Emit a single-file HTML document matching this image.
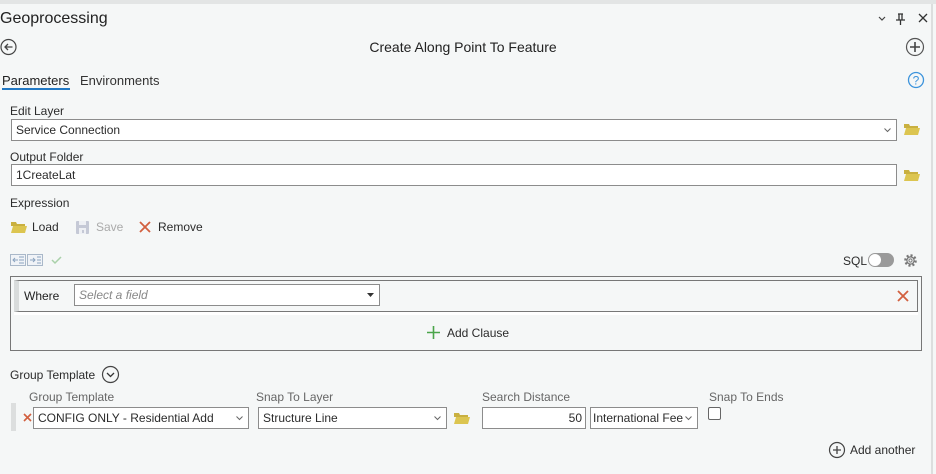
<!DOCTYPE html>
<html><head><style>
*{box-sizing:border-box;margin:0;padding:0}
body{width:936px;height:474px;background:#f5f7f7;font-family:"Liberation Sans",sans-serif;font-size:12px;color:#2b2b2b;position:relative;overflow:hidden}
.a{position:absolute;white-space:nowrap}
.inp{position:absolute;background:#fff;border:1px solid #8c8c8c;height:22px;line-height:20px;padding-left:4px;font-size:12px}
.chev{position:absolute;right:5px;top:8px;width:7px;height:5px}
.lbl{color:#666}
</style></head><body>
<div class="a" style="left:0;top:0;width:936px;height:4px;background:#e3e5e5"></div>
<div class="a" style="left:931px;top:4px;width:2px;height:470px;background:#dcdede"></div>
<div class="a" style="left:0;top:10px;font-size:16px;color:#222">Geoprocessing</div>
<svg class="a" style="left:874px;top:10px" width="60" height="18"><path d="M5 7l3 3 3-3" stroke="#444" fill="none" stroke-width="1.2"/><path d="M24 4h5M25 4v6h3V4M22 10h9M26.5 10v5" stroke="#333" fill="none" stroke-width="1.3"/><path d="M45 4l8 8M53 4l-8 8" stroke="#333" stroke-width="1.3"/></svg>
<svg class="a" style="left:0;top:38px" width="18" height="18"><circle cx="8.5" cy="9" r="7.5" fill="none" stroke="#444" stroke-width="1.2"/><path d="M12.5 9H5M8 6L5 9l3 3" stroke="#444" fill="none" stroke-width="1.3"/></svg>
<div class="a" style="left:0;width:926px;top:39px;text-align:center;font-size:14px;color:#222">Create Along Point To Feature</div>
<svg class="a" style="left:905px;top:37px" width="20" height="20"><circle cx="10" cy="10" r="8.5" fill="none" stroke="#555" stroke-width="1.2"/><path d="M10 5v10M5 10h10" stroke="#444" stroke-width="1.6"/></svg>
<div class="a" style="left:2px;top:73px;font-size:13px;color:#222">Parameters</div>
<div class="a" style="left:2px;top:88px;width:68px;height:2px;background:#2178c4"></div>
<div class="a" style="left:80px;top:73px;font-size:13px;color:#333">Environments</div>
<svg class="a" style="left:907px;top:71px" width="18" height="18"><circle cx="9" cy="9" r="7.5" fill="none" stroke="#3d94dc" stroke-width="1.3"/><text x="9" y="13.5" font-size="12" text-anchor="middle" fill="#3d94dc" font-family="Liberation Sans">?</text></svg>
<div class="a" style="left:10px;top:104px">Edit Layer</div>
<div class="inp" style="left:11px;top:119px;width:886px">Service Connection<svg class="chev"><path d="M0.5 0.5l3 3 3-3" stroke="#666" fill="none"/></svg></div>
<svg class="a" style="left:903px;top:122px" width="18" height="14"><path d="M1 2h5l1 2h8v2H1z" fill="#c9b040"/><path d="M1 13l2-7h14l-2 7z" fill="#dcc550"/></svg>
<div class="a" style="left:10px;top:150px">Output Folder</div>
<div class="inp" style="left:11px;top:164px;width:886px">1CreateLat</div>
<svg class="a" style="left:903px;top:168px" width="18" height="14"><path d="M1 2h5l1 2h8v2H1z" fill="#c9b040"/><path d="M1 13l2-7h14l-2 7z" fill="#dcc550"/></svg>
<div class="a" style="left:10px;top:196px">Expression</div>
<svg class="a" style="left:10px;top:220px" width="18" height="14"><path d="M1 2h5l1 2h8v2H1z" fill="#c9b040"/><path d="M1 13l2-7h14l-2 7z" fill="#dcc550"/></svg>
<div class="a" style="left:32px;top:220px">Load</div>
<svg class="a" style="left:75px;top:220px" width="16" height="15"><rect x="1" y="1" width="13" height="13" rx="1" fill="#c5c9d6"/><rect x="4" y="1" width="7" height="4" fill="#eef0f4"/><rect x="4" y="8" width="7" height="6" fill="#eef0f4"/><rect x="7" y="10" width="2" height="3" fill="#c5c9d6"/></svg>
<div class="a" style="left:96px;top:220px;color:#aaa">Save</div>
<svg class="a" style="left:139px;top:221px" width="12" height="12"><path d="M1 1l10 10M11 1L1 11" stroke="#d2603f" stroke-width="1.8"/></svg>
<div class="a" style="left:158px;top:220px">Remove</div>
<svg class="a" style="left:10px;top:253px" width="55" height="14"><rect x="0.5" y="1.5" width="15" height="11" fill="#f0f3f7" stroke="#a9b8c9"/><rect x="17.5" y="1.5" width="15" height="11" fill="#f0f3f7" stroke="#a9b8c9"/><path d="M3 7h5M5 5L3 7l2 2M9 4h5M9 7h5M9 10h5M20 7h5M23 5l2 2-2 2M27 4h4M27 7h4M27 10h4" stroke="#8aa3bf" fill="none"/><path d="M42 7l3 3 6-6" stroke="#a9d1a9" fill="none" stroke-width="1.5"/></svg>
<div class="a" style="left:843px;top:254px">SQL</div>
<div class="a" style="left:868px;top:253px;width:26px;height:14px;border-radius:7px;background:#9a9a9a"></div>
<div class="a" style="left:869px;top:254px;width:12px;height:12px;border-radius:6px;background:#fff"></div>
<svg class="a" style="left:902px;top:252px" width="17" height="17"><circle cx="8.5" cy="8.5" r="5" fill="none" stroke="#777" stroke-width="2.6" stroke-dasharray="2 1.9"/><circle cx="8.5" cy="8.5" r="3.6" fill="none" stroke="#777" stroke-width="1.2"/><circle cx="8.5" cy="8.5" r="1.6" fill="none" stroke="#777"/></svg>
<div class="a" style="left:10px;top:276px;width:912px;height:75px;border:1px solid #777"></div>
<div class="a" style="left:14px;top:280px;width:904px;height:32px;border:1px solid #777;background:#f5f7f7;border-left:5px solid #d9dcdc"></div>
<div class="a" style="left:14px;top:312px;width:904px;height:3px;background:#fff"></div>
<div class="a" style="left:24px;top:289px;color:#222">Where</div>
<div class="inp" style="left:74px;top:284px;width:306px;color:#888;font-style:italic">Select a field<svg class="chev" style="top:8px"><path d="M0 0h7L3.5 4z" fill="#333"/></svg></div>
<svg class="a" style="left:897px;top:290px" width="12" height="12"><path d="M1 1l10 10M11 1L1 11" stroke="#d2603f" stroke-width="1.8"/></svg>
<svg class="a" style="left:427px;top:326px" width="13" height="13"><path d="M6.5 0v13M0 6.5h13" stroke="#4aa54a" stroke-width="1.6"/></svg>
<div class="a" style="left:447px;top:326px">Add Clause</div>
<div class="a" style="left:10px;top:368px">Group Template</div>
<svg class="a" style="left:101px;top:365px" width="19" height="19"><circle cx="9.5" cy="9.5" r="8" fill="none" stroke="#444" stroke-width="1.2"/><path d="M6 8l3.5 3.5L13 8" stroke="#333" fill="none" stroke-width="1.3"/></svg>
<div class="a lbl" style="left:29px;top:390px">Group Template</div>
<div class="a lbl" style="left:256px;top:390px">Snap To Layer</div>
<div class="a lbl" style="left:482px;top:390px">Search Distance</div>
<div class="a lbl" style="left:709px;top:390px">Snap To Ends</div>
<div class="a" style="left:11px;top:403px;width:5px;height:28px;background:#dcdede"></div>
<svg class="a" style="left:23px;top:413px" width="9" height="9"><path d="M1 1l7 7M8 1L1 8" stroke="#d2603f" stroke-width="1.6"/></svg>
<div class="inp" style="left:33px;top:407px;width:216px">CONFIG ONLY - Residential Add<svg class="chev"><path d="M0.5 0.5l3 3 3-3" stroke="#666" fill="none"/></svg></div>
<div class="inp" style="left:258px;top:407px;width:189px">Structure Line<svg class="chev"><path d="M0.5 0.5l3 3 3-3" stroke="#666" fill="none"/></svg></div>
<svg class="a" style="left:453px;top:411px" width="18" height="14"><path d="M1 2h5l1 2h8v2H1z" fill="#c9b040"/><path d="M1 13l2-7h14l-2 7z" fill="#dcc550"/></svg>
<div class="inp" style="left:482px;top:407px;width:104px;text-align:right;padding-right:3px">50</div>
<div class="inp" style="left:590px;top:407px;width:108px;padding-left:2px;overflow:hidden">International Fee<svg class="chev" style="background:#fff"><path d="M0.5 0.5l3 3 3-3" stroke="#666" fill="none"/></svg></div>
<div class="a" style="left:708px;top:407px;width:13px;height:13px;border:1px solid #666;border-radius:2px;background:#fff"></div>
<svg class="a" style="left:828px;top:441px" width="18" height="18"><circle cx="9" cy="9" r="7.5" fill="none" stroke="#444" stroke-width="1.2"/><path d="M9 5v8M5 9h8" stroke="#444" stroke-width="1.3"/></svg>
<div class="a" style="left:850px;top:443px">Add another</div>
</body></html>
